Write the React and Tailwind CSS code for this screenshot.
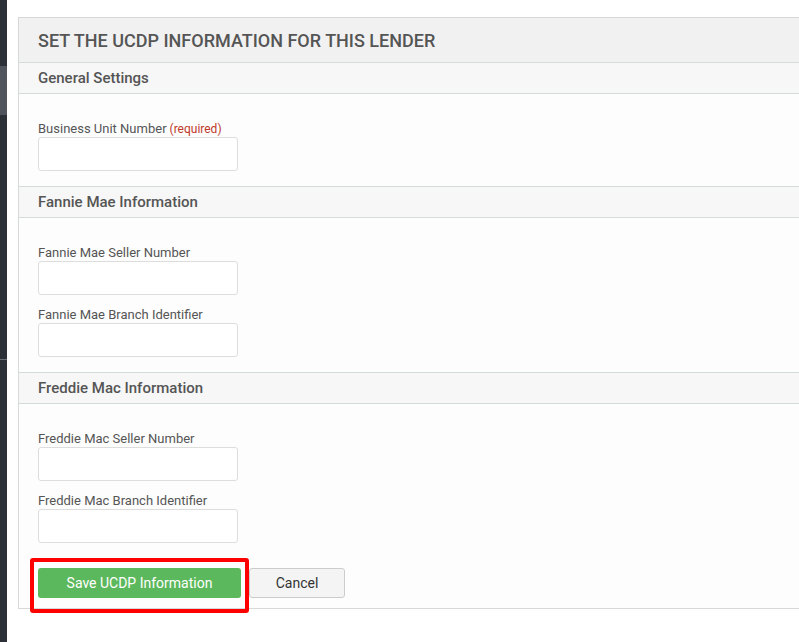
import React from "react";

function Field({ label, required }) {
  return (
    <div className="flex flex-col">
      <label className="box-content h-4 pt-px text-[13px] leading-4 text-[#555]">
        {label}
        {required && <span className="text-[12px] text-[#c0392b]"> (required)</span>}
      </label>
      <input
        type="text"
        className="h-[34px] w-[200px] rounded-[3px] border border-[#dddddd] bg-white outline-none"
      />
    </div>
  );
}

function SectionHeader({ children }) {
  return (
    <div className="h-[31px] border-b border-[#d5dbdb] bg-[#f7f7f7] pl-[19px] pt-px text-[15px] font-medium leading-[29px] text-[#555]">
      {children}
    </div>
  );
}

function Section({ title, fields, last, children }) {
  return (
    <div>
      <SectionHeader>{title}</SectionHeader>
      <div className={`flex flex-col gap-[11px] pl-[19px] pr-5 pt-[26px] ${last ? "pb-[10px]" : "border-b border-[#d5dbdb] pb-[15px]"}`}>
        {fields.map((f) => (
          <Field key={f.label} label={f.label} required={f.required} />
        ))}
        {children}
      </div>
    </div>
  );
}

export default function App() {
  return (
    <div className="relative flex h-[642px] w-[799px] overflow-hidden bg-white" style={{ fontFamily: "Roboto, 'Liberation Sans', sans-serif" }}>
      <div className="flex w-[7px] shrink-0 flex-col bg-[#2b3137]">
        <div className="h-[66px]" />
        <div className="h-[49px] bg-[#50555d]" />
        <div className="h-[244px]" />
        <div className="h-px bg-[#6c7177]" />
      </div>
      <div className="ml-[11px] mt-[17px] min-w-0 flex-1">
        <div className="w-[790px] border-l border-t border-b border-[#d7d9d9] bg-[#fdfdfd]">
          <div className="h-[45px] border-b border-[#d5dbdb] bg-[#f1f1f1] pl-[19px] pt-px text-[18px] font-medium leading-[43px] text-[#555]">
            SET THE UCDP INFORMATION FOR THIS LENDER
          </div>
          <Section title="General Settings" fields={[{ label: "Business Unit Number", required: true }]} />
          <Section
            title="Fannie Mae Information"
            fields={[{ label: "Fannie Mae Seller Number" }, { label: "Fannie Mae Branch Identifier" }]}
          />
          <Section
            title="Freddie Mac Information"
            last
            fields={[{ label: "Freddie Mac Seller Number" }, { label: "Freddie Mac Branch Identifier" }]}
          >
            <div className="mt-[14px] flex">
              <button className="h-[30px] w-[203px] rounded-[3px] bg-[#5cb85c] text-[14px] text-white">
                Save UCDP Information
              </button>
              <button className="ml-[8px] h-[30px] w-[96px] rounded-[3px] border border-[#cccccc] bg-[#f4f4f4] text-[14px] text-[#333]">
                Cancel
              </button>
            </div>
          </Section>
        </div>
      </div>
      <div className="pointer-events-none absolute left-[30px] top-[558px] h-[55px] w-[219px] rounded-[3px] border-4 border-[#ff0000]" />
    </div>
  );
}
